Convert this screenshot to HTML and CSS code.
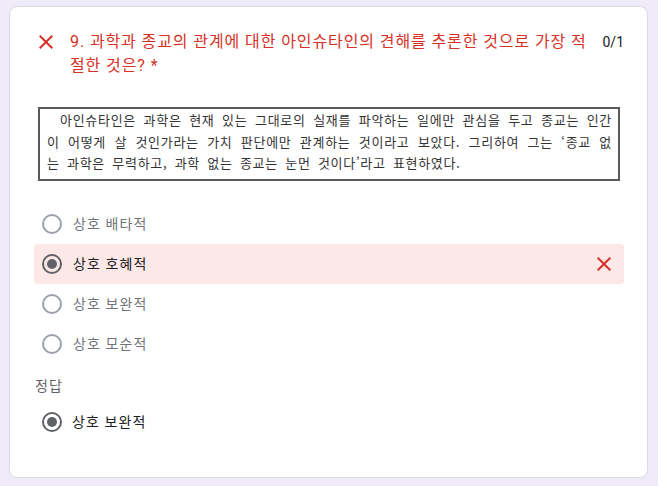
FILE: index.html
```html
<!DOCTYPE html>
<html lang="ko">
<head>
<meta charset="utf-8">
<title>퀴즈 결과</title>
<link rel="stylesheet" href="styles.css">
</head>
<body>
<div class="card">
  <div class="q-header">
    <svg class="icon-x" viewBox="0 0 24 24" width="24" height="24"><path d="M19 6.41L17.59 5 12 10.59 6.41 5 5 6.41 10.59 12 5 17.59 6.41 19 12 13.41 17.59 19 19 17.59 13.41 12z"/></svg>
    <div class="q-title">9. 과학과 종교의 관계에 대한 아인슈타인의 견해를 추론한 것으로 가장 적<br>절한 것은? <span class="req">*</span></div>
    <div class="q-score">0/1</div>
  </div>

  <div class="passage">
    <span class="pline first">아인슈타인은 과학은 현재 있는 그대로의 실재를 파악하는 일에만 관심을 두고 종교는 인간</span>
    <span class="pline">이 어떻게 살 것인가라는 가치 판단에만 관계하는 것이라고 보았다. 그리하여 그는 ‘종교 없</span>
    <span class="pline last">는 과학은 무력하고, 과학 없는 종교는 눈먼 것이다’라고 표현하였다.</span>
  </div>

  <div class="options">
    <div class="opt">
      <span class="radio"></span>
      <span class="opt-text">상호 배타적</span>
    </div>
    <div class="opt wrong">
      <span class="radio checked"></span>
      <span class="opt-text">상호 호혜적</span>
      <svg class="icon-x small" viewBox="0 0 24 24" width="24" height="24"><path d="M19 6.41L17.59 5 12 10.59 6.41 5 5 6.41 10.59 12 5 17.59 6.41 19 12 13.41 17.59 19 19 17.59 13.41 12z"/></svg>
    </div>
    <div class="opt">
      <span class="radio"></span>
      <span class="opt-text">상호 보완적</span>
    </div>
    <div class="opt">
      <span class="radio"></span>
      <span class="opt-text">상호 모순적</span>
    </div>
  </div>

  <div class="answer-label">정답</div>
  <div class="answer">
    <span class="radio checked"></span>
    <span class="answer-text">상호 보완적</span>
  </div>
</div>
</body>
</html>
```

FILE: styles.css
```css
html, body {
  margin: 0;
  padding: 0;
}
body {
  background: #f0ebf8;
  font-family: Roboto, "Noto Sans CJK KR", sans-serif;
  padding: 6px 10px 0 9px;
  height: 486px;
  box-sizing: border-box;
  overflow: hidden;
}
.card {
  background: #fff;
  border: 1px solid #dadce0;
  border-radius: 8px;
  height: 472px;
  box-sizing: border-box;
}
.q-header {
  display: flex;
  align-items: flex-start;
  padding: 23px 23px 0 24px;
}
.icon-x {
  flex: none;
  fill: #d93025;
  width: 24px;
  height: 24px;
}
.q-title {
  flex: 1;
  margin-left: 12px;
  color: #d93025;
  font-size: 16px;
  line-height: 24px;
  letter-spacing: 0.9px;
}
.req {
  color: #d93025;
}
.q-score {
  flex: none;
  margin-left: 12px;
  color: #202124;
  font-size: 14px;
  line-height: 24px;
}
.passage {
  margin: 29px 27px 0 28px;
  border: 2px solid #5a5a5a;
  padding: 0 6px 5px 7px;
  font-family: "Noto Sans CJK KR", sans-serif;
  font-size: 13px;
  line-height: 21.5px;
  color: #333;
  word-spacing: 3px;
  letter-spacing: 0.7px;
}
.pline {
  display: block;
  text-align: justify;
  text-align-last: justify;
  white-space: nowrap;
}
.pline.first {
  text-indent: 13px;
}
.pline.last {
  text-align-last: left;
}
.options {
  margin: 23px 23px 0 24px;
}
.opt {
  display: flex;
  align-items: center;
  height: 40px;
  padding: 0 8px;
  border-radius: 4px;
}
.opt.wrong {
  background: #fce8e6;
}
.radio {
  flex: none;
  width: 20px;
  height: 20px;
  box-sizing: border-box;
  border: 2px solid #9aa0a6;
  border-radius: 50%;
  display: flex;
  align-items: center;
  justify-content: center;
}
.radio.checked {
  border-color: #5f6368;
}
.radio.checked::after {
  content: "";
  width: 10px;
  height: 10px;
  border-radius: 50%;
  background: #5f6368;
}
.opt-text {
  flex: 1;
  margin-left: 11px;
  font-size: 14px;
  line-height: 20px;
  letter-spacing: 1.1px;
  color: #70757a;
}
.opt.wrong .opt-text {
  color: #202124;
}
.icon-x.small {
  margin-left: 8px;
}
.answer-label {
  margin: 12px 0 0 25px;
  font-size: 14px;
  line-height: 20px;
  letter-spacing: 1px;
  color: #5f6368;
}
.answer {
  display: flex;
  align-items: center;
  height: 40px;
  margin: 6px 0 0 32px;
}
.answer-text {
  margin-left: 10px;
  font-size: 14px;
  line-height: 20px;
  letter-spacing: 1.1px;
  color: #202124;
}
```
